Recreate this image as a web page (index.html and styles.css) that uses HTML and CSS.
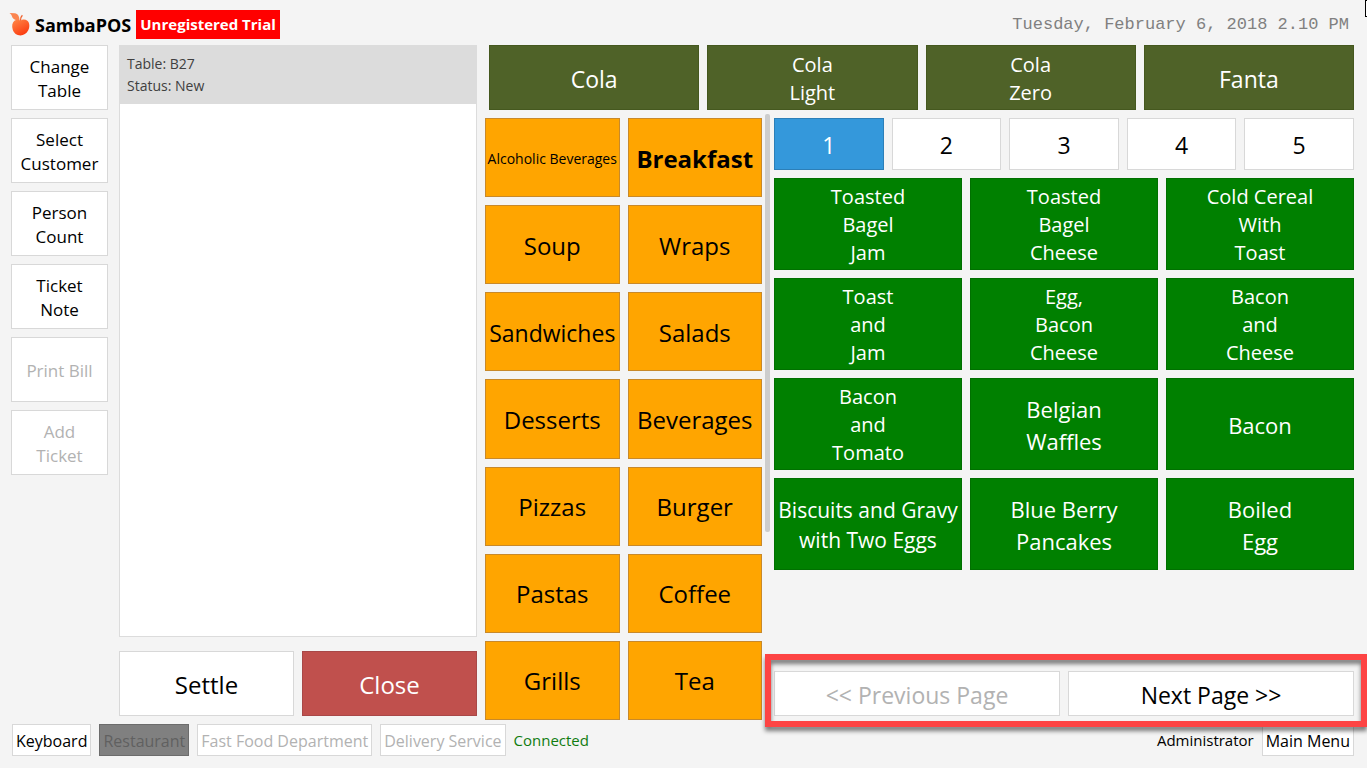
FILE: index.html
```html
<!DOCTYPE html>
<html lang="en">
<head>
<meta charset="utf-8">
<title>SambaPOS</title>
<link rel="stylesheet" href="styles.css">
</head>
<body>
<div class="window-corner"></div>
<header class="header">
  <svg class="logo" viewBox="0 0 24 28" aria-hidden="true">
    <defs>
      <linearGradient id="peel" x1="0" y1="0" x2="0.6" y2="1">
        <stop offset="0" stop-color="#ff8a4a"/>
        <stop offset="1" stop-color="#fb3c10"/>
      </linearGradient>
    </defs>
    <path d="M0.500 1.500L6.500 1.800C9.500 2.500 11.200 4.500 11.600 9.600C7.500 9.600 4.200 8.300 3.300 5.200C2.900 3.800 2 2.500 0.500 1.500Z" fill="#fb8550"/>
    <path d="M12.600 10C12.400 7.500 13.200 5.200 14.600 4" fill="none" stroke="#f0602c" stroke-width="1.500"/>
    <path d="M12.500 9.800C14.500 8.300 17.500 7.800 20 9.800C22.600 12 22.900 16.500 21 20.300C19.200 23.800 16 26 12.500 26C8.500 26 5.300 23.600 4.100 19.800C2.900 15.800 3.400 12 5.900 10C8 8.400 10.800 8.700 12.500 9.800Z" fill="url(#peel)"/>
  </svg>
  <h1 class="brand">SambaPOS</h1>
  <span class="trial">Unregistered Trial</span>
  <time class="clock">Tuesday, February 6, 2018 2.10 PM</time>
</header>
<main class="main">
  <nav class="commands">
    <button class="btn">Change<br>Table</button>
    <button class="btn">Select<br>Customer</button>
    <button class="btn">Person<br>Count</button>
    <button class="btn">Ticket<br>Note</button>
    <button class="btn" disabled>Print Bill</button>
    <button class="btn" disabled>Add<br>Ticket</button>
  </nav>
  <section class="ticket">
    <div class="ticket-sheet">
      <div class="ticket-info">Table: B27<br>Status: New</div>
    </div>
    <div class="ticket-actions">
      <button class="btn large">Settle</button>
      <button class="btn large close">Close</button>
    </div>
  </section>
  <section class="menu">
    <div class="favourites">
      <button class="btn fav">Cola</button>
      <button class="btn fav small">Cola<br>Light</button>
      <button class="btn fav small">Cola<br>Zero</button>
      <button class="btn fav">Fanta</button>
    </div>
    <div class="categories">
      <button class="btn cat tiny">Alcoholic Beverages</button>
      <button class="btn cat active">Breakfast</button>
      <button class="btn cat">Soup</button>
      <button class="btn cat">Wraps</button>
      <button class="btn cat snug">Sandwiches</button>
      <button class="btn cat">Salads</button>
      <button class="btn cat">Desserts</button>
      <button class="btn cat">Beverages</button>
      <button class="btn cat">Pizzas</button>
      <button class="btn cat">Burger</button>
      <button class="btn cat">Pastas</button>
      <button class="btn cat">Coffee</button>
      <button class="btn cat">Grills</button>
      <button class="btn cat">Tea</button>
    </div>
    <div class="scroll-track"><div class="scroll-thumb"></div></div>
    <div class="catalog">
      <div class="pages">
        <button class="btn page current">1</button>
        <button class="btn page">2</button>
        <button class="btn page">3</button>
        <button class="btn page">4</button>
        <button class="btn page">5</button>
      </div>
      <div class="products">
        <button class="btn product small">Toasted<br>Bagel<br>Jam</button>
        <button class="btn product small">Toasted<br>Bagel<br>Cheese</button>
        <button class="btn product small">Cold Cereal<br>With<br>Toast</button>
        <button class="btn product small">Toast<br>and<br>Jam</button>
        <button class="btn product small">Egg,<br>Bacon<br>Cheese</button>
        <button class="btn product small">Bacon<br>and<br>Cheese</button>
        <button class="btn product small">Bacon<br>and<br>Tomato</button>
        <button class="btn product">Belgian<br>Waffles</button>
        <button class="btn product">Bacon</button>
        <button class="btn product medium">Biscuits and Gravy<br>with Two Eggs</button>
        <button class="btn product">Blue Berry<br>Pancakes</button>
        <button class="btn product">Boiled<br>Egg</button>
      </div>
      <div class="pager">
        <button class="btn step" disabled>&lt;&lt; Previous Page</button>
        <button class="btn step">Next Page &gt;&gt;</button>
        <div class="highlight"></div>
      </div>
    </div>
  </section>
</main>
<footer class="footer">
  <button class="btn foot">Keyboard</button>
  <button class="btn foot selected" disabled>Restaurant</button>
  <button class="btn foot" disabled>Fast Food Department</button>
  <button class="btn foot" disabled>Delivery Service</button>
  <span class="status">Connected</span>
  <span class="user">Administrator</span>
  <button class="btn foot">Main Menu</button>
</footer>
</body>
</html>
```
FILE: styles.css
```css
* {
  box-sizing: border-box;
}

body {
  margin: 0;
  min-height: 100vh;
  display: flex;
  flex-direction: column;
  padding: 0 13px 12px 11px;
  background: #f4f4f4;
  color: #000;
  font-family: "Open Sans", "Noto Sans", sans-serif;
  font-size: 15px;
  position: relative;
  overflow-x: hidden;
}

.window-corner {
  position: absolute;
  top: 0;
  right: 0;
  width: 2px;
  height: 17px;
  border: solid #000;
  border-width: 1px 0 1px 1px;
  background: #fff;
}

.header {
  display: flex;
  align-items: center;
  height: 45px;
  padding: 4px 5px 0 0;
}

.logo {
  width: 22px;
  height: 27px;
  margin-left: -2px;
  flex: none;
}

.brand {
  margin: 0 5px 0 4px;
  font-size: 18px;
  font-weight: 700;
  line-height: 28px;
}

.trial {
  padding: 0 4px;
  background: #f00;
  color: #fff;
  font-size: 15px;
  font-weight: 700;
  line-height: 29px;
}

.clock {
  margin-left: auto;
  color: #808080;
  font-family: "Liberation Mono", monospace;
  font-size: 17px;
}

.main {
  flex: 1;
  display: grid;
  grid-template-columns: 97px minmax(0, 377fr) minmax(0, 869fr);
}

.btn {
  display: flex;
  align-items: center;
  justify-content: center;
  margin: 0;
  padding: 2px 0 0;
  min-width: 0;
  border: 1px solid #d8d8d8;
  border-radius: 0;
  background: #fff;
  color: #000;
  font-family: inherit;
  font-size: 17px;
  line-height: 24px;
  text-align: center;
  white-space: nowrap;
}

.btn:disabled {
  color: #b2b2b2;
}

.commands {
  display: grid;
  grid-auto-rows: 65px;
  align-content: start;
  gap: 8px;
}

.ticket {
  display: flex;
  flex-direction: column;
  gap: 14px;
  margin: 0 8px 4px 11px;
}

.ticket-sheet {
  flex: 1;
  border: 1px solid #dcdcdc;
  background: #fff;
}

.ticket-info {
  padding: 7px;
  background: #dcdcdc;
  color: #404040;
  font-size: 14px;
  line-height: 22px;
}

.ticket-actions {
  display: grid;
  grid-template-columns: 1fr 1fr;
  gap: 8px;
  height: 65px;
}

.large {
  font-size: 24px;
}

.close {
  border-color: #a84848;
  background: #c0504d;
  color: #fff;
}

.menu {
  display: grid;
  grid-template-columns: minmax(0, 277fr) 12px minmax(0, 580fr);
  grid-template-rows: 65px minmax(0, 1fr);
  row-gap: 8px;
}

.favourites {
  grid-column: 1 / -1;
  display: grid;
  grid-template-columns: repeat(4, minmax(0, 1fr));
  gap: 8px;
  margin-left: 4px;
}

.fav {
  border-color: #45581f;
  background: #4f6228;
  color: #fff;
  font-size: 23px;
}

.fav.small,
.product.small {
  font-size: 20px;
  line-height: 28px;
}

.categories {
  display: grid;
  grid-template-columns: 1fr 1fr;
  grid-auto-rows: minmax(0, 1fr);
  gap: 8px;
}

.cat {
  border-color: #c8892a;
  background: #ffa500;
  font-size: 24px;
}

.cat.tiny {
  font-size: 14px;
}

.cat.snug {
  font-size: 23px;
}

.cat.active {
  font-weight: 700;
}

.scroll-track {
  margin: -4px 4px 0 3px;
}

.scroll-thumb {
  height: 69%;
  border-radius: 2px;
  background: #cdcdcd;
}

.catalog {
  display: flex;
  flex-direction: column;
  gap: 8px;
  padding-bottom: 4px;
}

.pages {
  display: grid;
  grid-template-columns: repeat(5, minmax(0, 1fr));
  gap: 8px;
  height: 52px;
}

.page {
  font-size: 23px;
}

.page.current {
  border-color: #2c7fb8;
  background: #3498db;
  color: #fff;
}

.products {
  display: grid;
  grid-template-columns: repeat(3, minmax(0, 1fr));
  grid-auto-rows: 92px;
  gap: 8px;
}

.product {
  border-color: #007000;
  background: #008000;
  color: #fff;
  font-size: 22px;
  line-height: 32px;
}

.product.medium {
  font-size: 21px;
  line-height: 30px;
}

.pager {
  position: relative;
  display: grid;
  grid-template-columns: 1fr 1fr;
  gap: 8px;
  height: 45px;
  margin-top: auto;
}

.step {
  font-size: 23px;
}

.highlight {
  position: absolute;
  inset: -17px -13px -11px -9px;
  border: 6px solid #fd4444;
  filter: drop-shadow(0 4px 2px rgba(0, 0, 0, 0.5));
  pointer-events: none;
  z-index: 1;
}

.footer {
  display: flex;
  align-items: center;
  gap: 8px;
  height: 36px;
  padding: 4px 0 0 1px;
}

.foot {
  height: 32px;
  padding: 2px 3px 0;
  font-size: 16px;
}

.foot.selected {
  border-color: #6c6c6c;
  background: #808080;
  color: #606060;
}

.status {
  color: #107c10;
}

.user {
  margin-left: auto;
}
```
